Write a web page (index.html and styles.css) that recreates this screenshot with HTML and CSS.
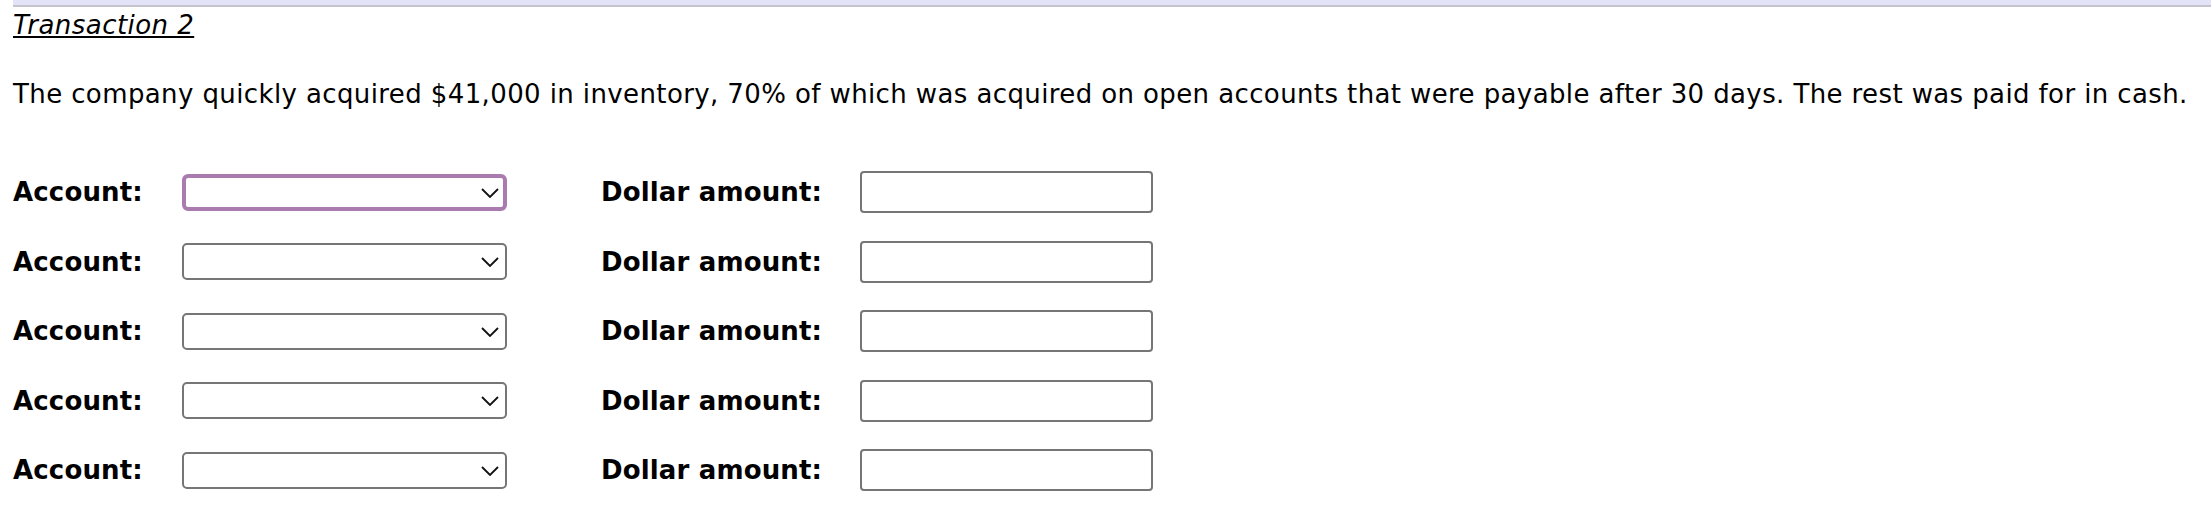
FILE: index.html
```html
<!DOCTYPE html>
<html>
<head>
<meta charset="utf-8">
<link rel="stylesheet" href="styles.css">
</head>
<body>
<div class="page">
  <div class="topbar"></div>
  <h2 class="title">Transaction 2</h2>
  <p class="desc">The company quickly acquired $41,000 in inventory, 70% of which was acquired on open accounts that were payable after 30 days. The rest was paid for in cash.</p>
  <div class="rows">
    <div class="row">
      <span class="label acct">Account:</span>
      <div class="sel-wrap">
        <select class="sel focused"><option></option></select>
        <svg class="chev" viewBox="0 0 18 10" width="18" height="10"><path d="M1 1 L9 9 L17 1" fill="none" stroke="#111" stroke-width="1.8"/></svg>
      </div>
      <span class="label dollar">Dollar amount:</span>
      <input class="amt" type="text">
    </div>
    <div class="row">
      <span class="label acct">Account:</span>
      <div class="sel-wrap">
        <select class="sel"><option></option></select>
        <svg class="chev" viewBox="0 0 18 10" width="18" height="10"><path d="M1 1 L9 9 L17 1" fill="none" stroke="#111" stroke-width="1.8"/></svg>
      </div>
      <span class="label dollar">Dollar amount:</span>
      <input class="amt" type="text">
    </div>
    <div class="row">
      <span class="label acct">Account:</span>
      <div class="sel-wrap">
        <select class="sel"><option></option></select>
        <svg class="chev" viewBox="0 0 18 10" width="18" height="10"><path d="M1 1 L9 9 L17 1" fill="none" stroke="#111" stroke-width="1.8"/></svg>
      </div>
      <span class="label dollar">Dollar amount:</span>
      <input class="amt" type="text">
    </div>
    <div class="row">
      <span class="label acct">Account:</span>
      <div class="sel-wrap">
        <select class="sel"><option></option></select>
        <svg class="chev" viewBox="0 0 18 10" width="18" height="10"><path d="M1 1 L9 9 L17 1" fill="none" stroke="#111" stroke-width="1.8"/></svg>
      </div>
      <span class="label dollar">Dollar amount:</span>
      <input class="amt" type="text">
    </div>
    <div class="row">
      <span class="label acct">Account:</span>
      <div class="sel-wrap">
        <select class="sel"><option></option></select>
        <svg class="chev" viewBox="0 0 18 10" width="18" height="10"><path d="M1 1 L9 9 L17 1" fill="none" stroke="#111" stroke-width="1.8"/></svg>
      </div>
      <span class="label dollar">Dollar amount:</span>
      <input class="amt" type="text">
    </div>
  </div>
</div>
</body>
</html>
```
FILE: styles.css
```css
html, body {
  margin: 0;
  padding: 0;
  background: #fff;
}
body {
  font-family: "DejaVu Sans", Verdana, sans-serif;
  font-size: 26px;
  color: #000;
  overflow: hidden;
}
.page {
  padding-left: 13px;
}
.topbar {
  height: 5px;
  background: #e3e3f8;
  border-bottom: 2px solid #c4c4cc;
}
.title {
  margin: 3px 0 0 0;
  font-size: 26px;
  font-weight: normal;
  font-style: italic;
  text-decoration: underline;
  line-height: 30px;
  letter-spacing: 0.45px;
}
.desc {
  margin: 39px 0 0 0;
  line-height: 30px;
  white-space: nowrap;
  letter-spacing: 0.39px;
}
.rows {
  margin-top: 62px;
  display: flex;
  flex-direction: column;
  gap: 27.5px;
}
.row {
  display: flex;
  align-items: center;
  height: 42px;
}
.label {
  font-weight: bold;
  line-height: 30px;
  letter-spacing: 0.15px;
}
.acct {
  width: 169px;
}
.dollar {
  width: 259px;
  margin-left: 94px;
}
.sel-wrap {
  position: relative;
  width: 325px;
  height: 37px;
}
.sel {
  appearance: none;
  -webkit-appearance: none;
  box-sizing: border-box;
  width: 100%;
  height: 100%;
  margin: 0;
  border: 2px solid #767676;
  border-radius: 5px;
  background: #fff;
  font: inherit;
}
.sel.focused {
  border: 4px solid #a97bae;
  border-radius: 6px;
  outline: none;
}
.chev {
  position: absolute;
  right: 8px;
  top: 14px;
  pointer-events: none;
}
.amt {
  box-sizing: border-box;
  width: 293px;
  height: 42px;
  margin: 0;
  border: 2px solid #767676;
  border-radius: 4px;
  background: #fff;
  font: inherit;
}
```
